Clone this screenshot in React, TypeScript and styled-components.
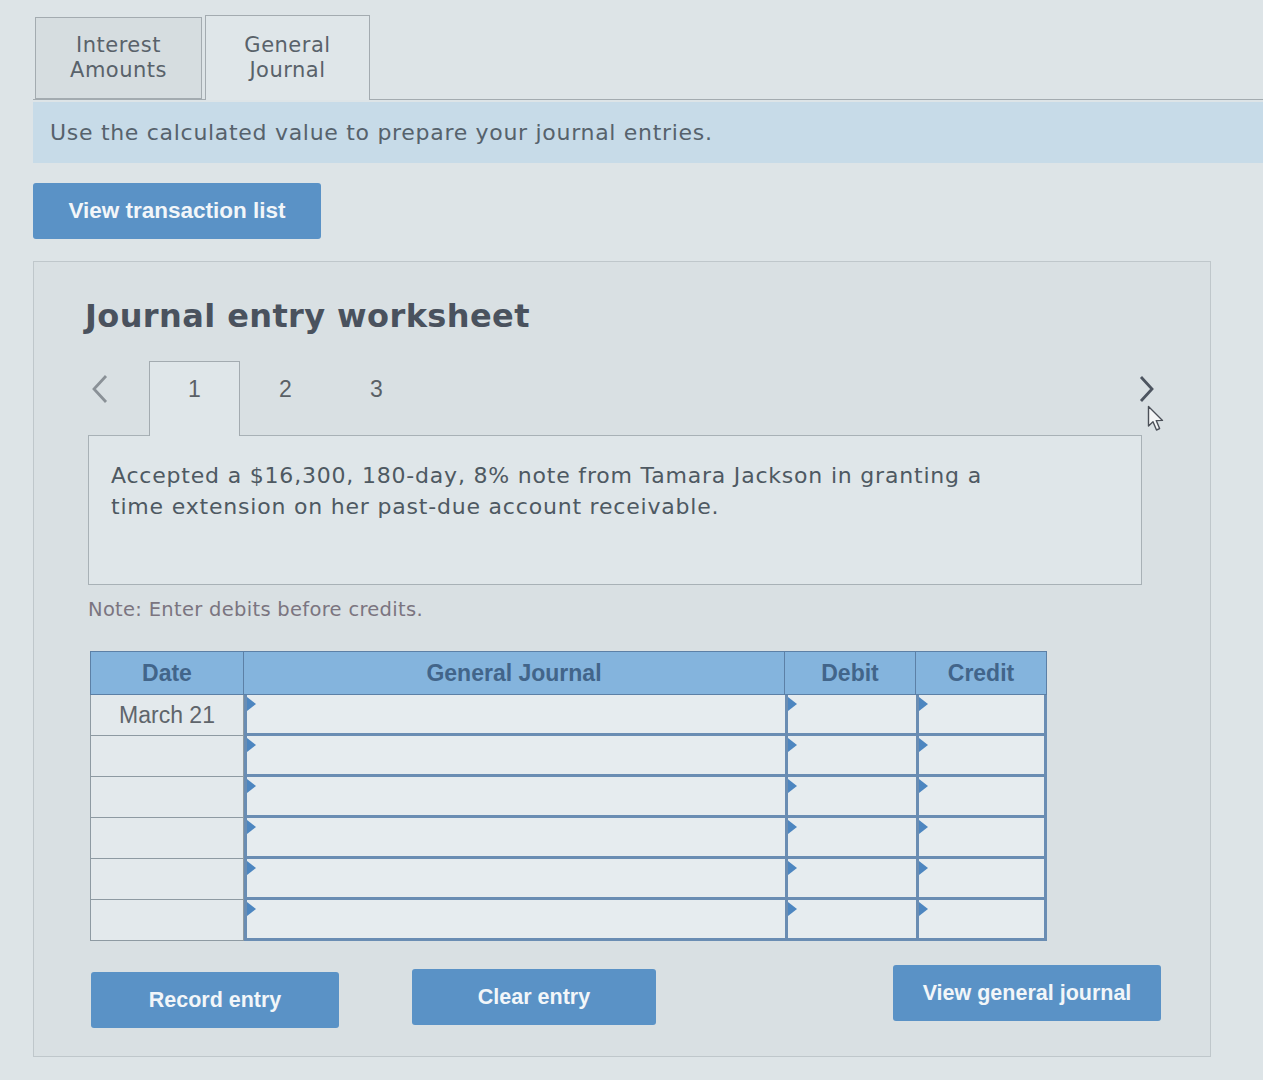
import React from 'react';
import styled, { createGlobalStyle } from 'styled-components';

const GlobalStyle = createGlobalStyle`
  body {
    margin: 0;
    background: #dde4e7;
    font-family: 'DejaVu Sans', Verdana, sans-serif;
  }
`;

const Page = styled.div`
  position: relative;
  width: 1263px;
  height: 1080px;
  padding: 14px 0 0 33px;
  box-sizing: border-box;
  overflow: hidden;
`;

const TabBar = styled.div`
  display: flex;
  align-items: flex-end;
  gap: 3px;
  padding-left: 2px;
  border-bottom: 1px solid #a3abb0;
  height: 85px;
`;

const Tab = styled.div<{ active?: boolean }>`
  width: ${p => (p.active ? '165px' : '167px')};
  height: ${p => (p.active ? '85px' : '82px')};
  margin-bottom: ${p => (p.active ? '-1px' : '0')};
  box-sizing: border-box;
  border: 1px solid #a3abb0;
  border-bottom: ${p => (p.active ? 'none' : '1px solid #a3abb0')};
  background: ${p => (p.active ? '#dfe6e9' : '#d6dde0')};
  display: flex;
  align-items: center;
  justify-content: center;
  text-align: center;
  font-size: 21px;
  letter-spacing: 0.5px;
  line-height: 25px;
  color: #59626a;
`;

const Banner = styled.div`
  margin-top: 2px;
  height: 61px;
  background: #c7dbe8;
  display: flex;
  align-items: center;
  padding-left: 17px;
  font-size: 22px;
  letter-spacing: 0.7px;
  color: #56626c;
`;

const BlueButton = styled.button<{ w: number }>`
  width: ${p => p.w}px;
  height: 56px;
  border: none;
  border-radius: 3px;
  background: #5a92c6;
  color: #f2f6f9;
  font-family: 'Liberation Sans', Arial, sans-serif;
  font-weight: bold;
  font-size: 21.5px;
  cursor: pointer;
`;

const TopButton = styled(BlueButton)`
  margin-top: 20px;
  font-size: 22.5px;
`;

const Panel = styled.div`
  margin-top: 22px;
  width: 1178px;
  height: 796px;
  box-sizing: border-box;
  border: 1px solid #bfc7cb;
  background: #d9e0e3;
  padding: 0 0 0 54px;
`;

const Heading = styled.h2`
  margin: 34px 0 0 -3px;
  font-size: 32px;
  letter-spacing: 0.4px;
  line-height: 40px;
  font-weight: bold;
  color: #4a525e;
`;

const StepRow = styled.div`
  margin-top: 25px;
  width: 1067px;
  height: 74px;
  display: flex;
  align-items: flex-end;
  position: relative;
  z-index: 1;
`;

const Arrow = styled.div<{ right?: boolean }>`
  width: 61px;
  height: 56px;
  display: flex;
  align-items: center;
  justify-content: ${p => (p.right ? 'flex-end' : 'flex-start')};
  padding-left: ${p => (p.right ? '0' : '3px')};
  box-sizing: border-box;
  margin-left: ${p => (p.right ? 'auto' : '0')};
  color: ${p => (p.right ? '#4d5560' : '#8a9197')};
  align-self: flex-start;
`;

const Step = styled.div<{ active?: boolean }>`
  width: 91px;
  height: 75px;
  box-sizing: border-box;
  border: ${p => (p.active ? '1px solid #a3abb0' : '1px solid transparent')};
  border-bottom: none;
  margin-bottom: -1px;
  background: ${p => (p.active ? '#dfe6e9' : 'transparent')};
  display: flex;
  justify-content: center;
  padding-top: 14px;
  font-family: 'Liberation Sans', Arial, sans-serif;
  font-size: 23px;
  color: #5a6066;
`;

const Description = styled.div`
  width: 1054px;
  height: 150px;
  box-sizing: border-box;
  border: 1px solid #a8b1b6;
  background: #dfe6e9;
  padding: 24px 22px;
  font-size: 22px;
  letter-spacing: 0.8px;
  line-height: 31px;
  color: #4e5962;
`;

const Note = styled.div`
  margin-top: 13px;
  font-size: 19.5px;
  letter-spacing: 0.3px;
  color: #7b7580;
`;

const Table = styled.div`
  margin-top: 30px;
  margin-left: 2px;
  width: 957px;
`;

const Row = styled.div`
  display: grid;
  grid-template-columns: 154px 541px 131px 131px;
`;

const HeadCell = styled.div`
  height: 44px;
  box-sizing: border-box;
  background: #84b4dd;
  border: 1px solid #5c80a6;
  border-left-width: 0;
  &:first-child {
    border-left-width: 1px;
  }
  display: flex;
  align-items: center;
  justify-content: center;
  font-family: 'Liberation Sans', Arial, sans-serif;
  font-weight: bold;
  font-size: 23px;
  color: #42658a;
`;

const DateCell = styled.div`
  height: 41px;
  box-sizing: border-box;
  border: 1px solid #8e9aa2;
  border-top: none;
  background: #e3e9ec;
  display: flex;
  align-items: center;
  justify-content: center;
  font-family: 'Liberation Sans', Arial, sans-serif;
  font-size: 23px;
  color: #5f656b;
`;

const InputCell = styled.div`
  position: relative;
  height: 41px;
  box-sizing: border-box;
  border: 3px solid #6a8db3;
  border-top-width: 0;
  border-right-width: 0;
  &:last-child {
    border-right-width: 3px;
  }
  background: #e6ecef;
`;

const Marker = styled.span`
  position: absolute;
  left: 0;
  top: 2px;
  width: 0;
  height: 0;
  border-top: 7px solid transparent;
  border-bottom: 7px solid transparent;
  border-left: 9px solid #4d86c0;
`;

const ButtonRow = styled.div`
  margin-top: 31px;
  margin-left: 3px;
  display: flex;
  align-items: flex-start;
  gap: 73px;
`;

const ShiftedButton = styled(BlueButton)<{ lift: number }>`
  margin-top: ${p => -p.lift}px;
`;

const RightButton = styled(ShiftedButton)`
  margin-left: auto;
  margin-right: 49px;
`;

const Cursor = styled.svg`
  position: absolute;
  left: 1147px;
  top: 405px;
`;

const rows = ['March 21', '', '', '', '', ''];

export default function App() {
  return (
    <Page>
      <GlobalStyle />
      <TabBar>
        <Tab>
          Interest
          <br />
          Amounts
        </Tab>
        <Tab active>
          General
          <br />
          Journal
        </Tab>
      </TabBar>
      <Banner>Use the calculated value to prepare your journal entries.</Banner>
      <TopButton w={288}>View transaction list</TopButton>
      <Panel>
        <Heading>Journal entry worksheet</Heading>
        <StepRow>
          <Arrow>
            <svg width="18" height="30" viewBox="0 0 18 30">
              <path d="M15 2 L3 15 L15 28" fill="none" stroke="currentColor" strokeWidth="2.8" />
            </svg>
          </Arrow>
          <Step active>1</Step>
          <Step>2</Step>
          <Step>3</Step>
          <Arrow right>
            <svg width="16" height="28" viewBox="0 0 16 28">
              <path d="M2 2 L13 14 L2 26" fill="none" stroke="currentColor" strokeWidth="2.8" />
            </svg>
          </Arrow>
        </StepRow>
        <Description>
          Accepted a $16,300, 180-day, 8% note from Tamara Jackson in granting a
          <br />
          time extension on her past-due account receivable.
        </Description>
        <Note>Note: Enter debits before credits.</Note>
        <Table>
          <Row>
            <HeadCell>Date</HeadCell>
            <HeadCell>General Journal</HeadCell>
            <HeadCell>Debit</HeadCell>
            <HeadCell>Credit</HeadCell>
          </Row>
          {rows.map((d, i) => (
            <Row key={i}>
              <DateCell>{d}</DateCell>
              <InputCell>
                <Marker />
              </InputCell>
              <InputCell>
                <Marker />
              </InputCell>
              <InputCell>
                <Marker />
              </InputCell>
            </Row>
          ))}
        </Table>
        <ButtonRow>
          <BlueButton w={248}>Record entry</BlueButton>
          <ShiftedButton w={244} lift={3}>
            Clear entry
          </ShiftedButton>
          <RightButton w={268} lift={7}>
            View general journal
          </RightButton>
        </ButtonRow>
      </Panel>
      <Cursor width="20" height="28" viewBox="0 0 20 28">
        <path
          d="M1.5 1.5 L1.5 21 L6 16.8 L9.5 25 L12.6 23.6 L9.2 15.6 L15.5 15.4 Z"
          fill="#f4f6f7"
          stroke="#4b5058"
          strokeWidth="1.4"
          strokeLinejoin="round"
        />
      </Cursor>
    </Page>
  );
}
